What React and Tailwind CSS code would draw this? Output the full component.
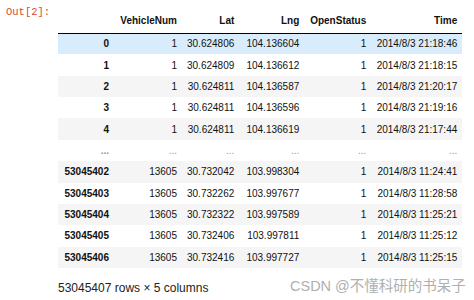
import React from 'react';

const rows = [
  ['0', '1', '30.624806', '104.136604', '1', '2014/8/3 21:18:46'],
  ['1', '1', '30.624809', '104.136612', '1', '2014/8/3 21:18:15'],
  ['2', '1', '30.624811', '104.136587', '1', '2014/8/3 21:20:17'],
  ['3', '1', '30.624811', '104.136596', '1', '2014/8/3 21:19:16'],
  ['4', '1', '30.624811', '104.136619', '1', '2014/8/3 21:17:44'],
  ['...', '...', '...', '...', '...', '...'],
  ['53045402', '13605', '30.732042', '103.998304', '1', '2014/8/3 11:24:41'],
  ['53045403', '13605', '30.732262', '103.997677', '1', '2014/8/3 11:28:58'],
  ['53045404', '13605', '30.732322', '103.997589', '1', '2014/8/3 11:25:21'],
  ['53045405', '13605', '30.732406', '103.997811', '1', '2014/8/3 11:25:12'],
  ['53045406', '13605', '30.732416', '103.997727', '1', '2014/8/3 11:25:15'],
];

const columns = ['VehicleNum', 'Lat', 'Lng', 'OpenStatus', 'Time'];
const widths = ['w-[56px]', 'w-[68px]', 'w-[56px]', 'w-[65px]', 'w-[67px]', 'w-[91px]'];

const App = () => {
  return (
    <div className="relative w-[474px] h-[300px] bg-white overflow-hidden font-['Liberation_Sans',Arial,sans-serif]">
      <div className="flex">
        <div className="w-[58px] pl-[6px] pt-[5px] text-[10.5px] leading-[14px] text-[#dc4a2a] font-['Liberation_Mono',monospace]">
          Out[2]:
        </div>
        <div className="pt-[9px]">
          <table className="table-fixed border-collapse text-[10px] text-[#111]">
            <thead>
              <tr className="h-[24px] border-b border-black">
                <th className={`${widths[0]} px-[5px]`}></th>
                {columns.map((c, i) => (
                  <th key={c} className={`${widths[i + 1]} px-[5px] text-right font-bold align-middle`}>
                    {c}
                  </th>
                ))}
              </tr>
            </thead>
            <tbody>
              {rows.map((r, ri) => {
                const bg = ri === 0 ? 'bg-[#d9ecfb]' : ri % 2 === 0 ? 'bg-[#f5f5f5]' : 'bg-white';
                const dots = r[0] === '...';
                return (
                  <tr key={ri} className={`h-[21.36px] ${bg}`}>
                    {r.map((v, ci) => (
                      <td
                        key={ci}
                        className={`px-[5px] text-right align-middle whitespace-nowrap ${ci === 0 ? 'font-bold' : ''} ${dots ? 'text-[#999]' : ''}`}
                      >
                        {v}
                      </td>
                    ))}
                  </tr>
                );
              })}
            </tbody>
          </table>
          <div className="mt-[13px] text-[12px] leading-[14px] text-[#222]">53045407 rows × 5 columns</div>
        </div>
      </div>
      <div className="absolute left-[290px] top-[277px] text-[14.5px] leading-[19px] text-[#b0b0b0] whitespace-nowrap font-['Liberation_Sans','Noto_Sans_CJK_SC',sans-serif]">
        CSDN @不懂科研的书呆子
      </div>
    </div>
  );
};

export default App;
